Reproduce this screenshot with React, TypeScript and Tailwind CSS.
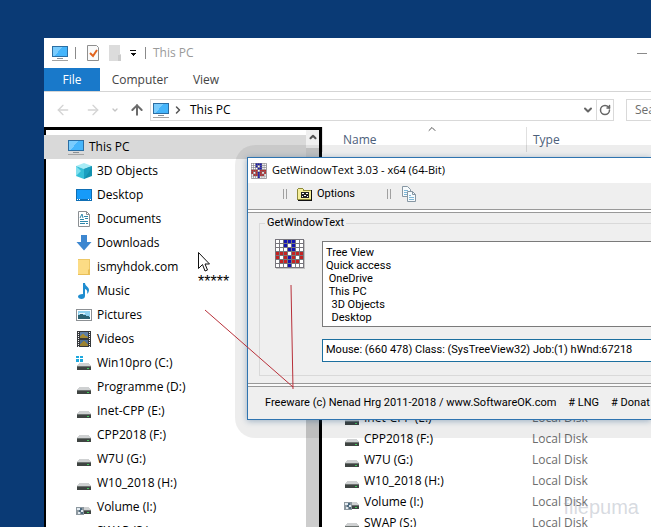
import React from 'react';
import { ArrowLeft, ArrowRight, ArrowUp, ChevronDown, ChevronRight, ChevronUp, RotateCw } from 'lucide-react';

type IconProps = { className?: string };

const PcIcon: React.FC<IconProps> = ({ className = '' }) => (
  <svg viewBox="0 0 16 16" className={`h-4 w-4 shrink-0 ${className}`} shapeRendering="crispEdges">
    <rect x="0" y="1" width="16" height="11" fill="#2b6ea3" />
    <rect x="1" y="2" width="14" height="9" fill="#45b5fb" />
    <path d="M1 2h9L3 11H1z" fill="#7accfd" />
    <rect x="5" y="13" width="6" height="1" fill="#8a8f94" />
    <rect x="0" y="15" width="16" height="1" fill="#a3a3a3" />
  </svg>
);

const CubeIcon = () => (
  <svg viewBox="0 0 16 16" className="h-4 w-4 shrink-0">
    <path d="M0 3 8 0l8 3-8 3z" fill="#a8ecf6" />
    <path d="M0 3l8 3v10l-8-3z" fill="#35bfd8" />
    <path d="M16 3L8 6v10l8-3z" fill="#1391ae" />
    <path d="M0 3l5 5-5 5z" fill="#7fdfee" />
    <path d="M8 6l8-3-3 6-5 7z" fill="#1a9fc0" />
  </svg>
);

const DesktopIcon = () => (
  <svg viewBox="0 0 16 16" className="h-4 w-4 shrink-0" shapeRendering="crispEdges">
    <rect x="0" y="2" width="16" height="12" fill="#0f6fb5" />
    <rect x="1" y="3" width="14" height="9" fill="#169bf9" />
    <path d="M1 12h1v1H1zM3 12h1v1H3zM12 12h1v1h-1zM14 12h1v1h-1z" fill="#fff" />
  </svg>
);

const DocumentIcon = () => (
  <svg viewBox="0 0 16 16" className="h-4 w-4 shrink-0">
    <path d="M2.5.5h8l3 3v12h-11z" fill="#fff" stroke="#8b8f93" />
    <path d="M10.5.5v3h3" fill="none" stroke="#8b8f93" />
    <path d="M4 7l2-4 1 4M8 5.500h4M4 8.500h4M9 7.500h3M4 10.500h8M4 12.500h5M10 12.500h2" fill="none" stroke="#2f87ab" />
  </svg>
);

const DownloadIcon = () => (
  <svg viewBox="0 0 16 16" className="h-4 w-4 shrink-0">
    <path d="M5 0h6v7h4.500L8 15.500.500 7H5z" fill="#3d87d0" />
  </svg>
);

const FolderIcon = () => (
  <svg viewBox="0 0 16 16" className="h-4 w-4 shrink-0">
    <path d="M2 0h11v11h1v5H2z" fill="#fcdc85" />
    <path d="M2 15h10v-4l2-2v7H2z" fill="#e9bf58" />
    <path d="M2 0h11v1H2zM13 0h1v10h-1z" fill="#edc867" />
  </svg>
);

const MusicIcon = () => (
  <svg viewBox="0 0 16 16" className="h-4 w-4 shrink-0">
    <path d="M7 0h2c0 3 4 4 4 7 0 2-1 3-2 4 1-3-.5-4.500-2-5v7c0 2-1.500 3-3.500 3S2 15 2 13.500 4 11 7 11z" fill="#1f8dd0" />
  </svg>
);

const PictureIcon = () => (
  <svg viewBox="0 0 16 16" className="h-4 w-4 shrink-0" shapeRendering="crispEdges">
    <rect x="0" y="2" width="16" height="12" fill="#8c9094" />
    <rect x="1" y="3" width="14" height="10" fill="#fff" />
    <rect x="2" y="4" width="12" height="8" fill="#8fd0ee" />
    <path d="M2 8l4-1 8 3v2H2z" fill="#2b6272" />
    <path d="M3 6h6v1H3z" fill="#e8f7fd" />
  </svg>
);

const VideoIcon = () => (
  <svg viewBox="0 0 16 16" className="h-4 w-4 shrink-0" shapeRendering="crispEdges">
    <rect x="1" y="0" width="14" height="16" fill="#35383b" />
    <path d="M2.500 1v15M13.500 1v15" stroke="#f5f5f5" strokeDasharray="1 1" />
    <rect x="4" y="1" width="8" height="6" fill="#5f7fa4" />
    <path d="M4 5l3-2 5 3v1H4z" fill="#a68c35" />
    <rect x="4" y="9" width="8" height="6" fill="#4e6f93" />
    <path d="M4 13l4-3 4 3v2H4z" fill="#9a8232" />
  </svg>
);

const DriveIcon: React.FC<{ badge?: 'windows' | 'volume' }> = ({ badge }) => (
  <svg viewBox="0 0 16 16" className="h-4 w-4 shrink-0" shapeRendering="crispEdges">
    <path d="M3 8h10l2 3H1z" fill="#cfd1d2" />
    <rect x="1" y="11" width="14" height="4" fill="#3f4442" />
    <rect x="1" y="11" width="14" height="1" fill="#6d7371" />
    <rect x="11" y="13" width="2" height="1" fill="#43c95c" />
    {badge === 'windows' && <path d="M0 1h3v2H0zM4 1h3v2H4zM0 4h3v3H0zM4 4h3v3H4z" fill="#1fa9de" />}
    {badge === 'volume' && (
      <>
        <rect x="0" y="8" width="8" height="8" fill="#8d989f" />
        <path d="M1 9h3v2H1zM5 11h2v2H5zM2 13h2v2H2z" fill="#e2eaf0" />
        <path d="M4 9h2v2H4zM3 11h2v2H3zM5 13h2v2H5z" fill="#4f6b80" />
      </>
    )}
  </svg>
);

// b = blue, r = red, w = white
const LOGO_ROWS = ['wwbbbww', 'wwbwbww', 'wwwbbww', 'rrrwrrr', 'rwrbrwr', 'wrrbrrw', 'wwwbwww'];
const LOGO_COLORS: Record<string, string> = { w: '#ffffff', b: '#1414b4', r: '#c42222' };

const LogoIcon: React.FC<IconProps> = ({ className = '' }) => (
  <svg viewBox="0 0 30 30" className={`shrink-0 ${className}`}>
    <rect x="1" y="1" width="29" height="29" fill="#c3c3c3" />
    <rect width="29" height="29" fill="#77757c" />
    {LOGO_ROWS.map((row, y) =>
      row.split('').map((cell, x) => (
        <rect key={`${x}-${y}`} x={x * 4 + 1} y={y * 4 + 1} width="3" height="3" fill={LOGO_COLORS[cell]} />
      ))
    )}
  </svg>
);

const treeItems = [
  { label: '3D Objects', icon: <CubeIcon /> },
  { label: 'Desktop', icon: <DesktopIcon /> },
  { label: 'Documents', icon: <DocumentIcon /> },
  { label: 'Downloads', icon: <DownloadIcon /> },
  { label: 'ismyhdok.com', icon: <FolderIcon /> },
  { label: 'Music', icon: <MusicIcon /> },
  { label: 'Pictures', icon: <PictureIcon /> },
  { label: 'Videos', icon: <VideoIcon /> },
  { label: 'Win10pro (C:)', icon: <DriveIcon badge="windows" /> },
  { label: 'Programme (D:)', icon: <DriveIcon /> },
  { label: 'Inet-CPP (E:)', icon: <DriveIcon /> },
  { label: 'CPP2018 (F:)', icon: <DriveIcon /> },
  { label: 'W7U (G:)', icon: <DriveIcon /> },
  { label: 'W10_2018 (H:)', icon: <DriveIcon /> },
  { label: 'Volume (I:)', icon: <DriveIcon badge="volume" /> },
  { label: 'SWAP (S:)', icon: <DriveIcon /> },
];

const drives = treeItems.slice(-6);

const windowText = ['Tree View', 'Quick access', ' OneDrive', ' This PC', '  3D Objects', '  Desktop'].join('\n');

const TitleBar = () => (
  <header className="flex h-[30px] shrink-0 items-center pl-2 text-[#9a9a9a]">
    <PcIcon />
    <span className="ml-[7px] h-3 w-px bg-[#8a8a8a]" />
    <button aria-label="Properties" className="ml-[9px]">
      <svg viewBox="0 0 16 16" className="h-4 w-4">
        <path d="M2.500.500h9l2 2v13h-11z" fill="#fafafa" stroke="#8f8f8f" />
        <path d="M5 8l3 3 4-6" fill="none" stroke="#e2631c" strokeWidth="2" />
      </svg>
    </button>
    <button aria-label="New folder" className="ml-1.5">
      <svg viewBox="0 0 16 16" className="h-4 w-4">
        <path d="M2 0h11v9h1v7H2z" fill="#dcdcdc" />
        <path d="M11 10h3v6h-3z" fill="#cbcbcb" />
      </svg>
    </button>
    <button aria-label="Customize toolbar" className="ml-1.5">
      <svg viewBox="0 0 8 8" className="h-2 w-2" shapeRendering="crispEdges">
        <path d="M1 1h6v1H1zM1 4h6L4 7z" fill="#111" />
      </svg>
    </button>
    <span className="ml-2 h-3 w-px bg-[#8a8a8a]" />
    <h1 className="ml-[7px]">This PC</h1>
    <button aria-label="Minimize" className="ml-auto h-4 pr-1">
      <span className="block h-px w-2.5 bg-[#8a8a8a]" />
    </button>
  </header>
);

const Ribbon = () => (
  <nav className="flex h-6 shrink-0 border-b border-[#d5d5d5] text-[#444]">
    <button className="w-14 bg-[#1979ca] text-white">File</button>
    <button className="w-20">Computer</button>
    <button className="w-[52px]">View</button>
  </nav>
);

const AddressBar = () => (
  <div className="flex h-[35px] shrink-0 items-center">
    <div className="flex w-[106px] shrink-0 items-center pl-[11px]">
      <button aria-label="Back"><ArrowLeft className="h-4 w-4 text-[#d4d4d4]" /></button>
      <button aria-label="Forward" className="ml-3.5"><ArrowRight className="h-4 w-4 text-[#d4d4d4]" /></button>
      <button aria-label="Recent locations" className="ml-2.5"><ChevronDown className="h-2 w-2 text-[#c4c4c4]" strokeWidth={4} /></button>
      <button aria-label="Up" className="ml-2.5"><ArrowUp className="h-4 w-4 text-[#6b6b6b]" strokeWidth={3} /></button>
    </div>
    <div className="flex h-[22px] flex-1 items-center border border-[#d9d9d9] pl-0.5">
      <PcIcon />
      <ChevronRight className="ml-[3px] h-3 w-3 text-[#555]" strokeWidth={3} />
      <button className="ml-1.5 text-black">This PC</button>
      <button aria-label="Address history" className="mr-0.5 ml-auto"><ChevronDown className="h-3 w-3 text-[#666]" strokeWidth={4} /></button>
      <button aria-label="Refresh" className="flex h-full w-[17px] items-center justify-center border-l border-[#d9d9d9]">
        <RotateCw className="h-3 w-3 text-[#666]" strokeWidth={3} />
      </button>
    </div>
    <input
      aria-label="Search"
      placeholder="Sea"
      className="ml-3 h-[22px] w-[25px] shrink-0 border border-r-0 border-[#d9d9d9] pl-2 outline-none placeholder:text-[#6d6d6d]"
    />
  </div>
);

const TreePane = () => (
  <aside className="flex w-[278px] shrink-0 border-t-3 border-r-3 border-black">
    <div className="min-w-0 flex-1 border-l-2 border-black pt-[5px]">
      <a href="#this-pc" className="-ml-0.5 flex h-6 items-center gap-[5px] bg-[#d9d9d9] pl-6">
        <PcIcon />
        This PC
      </a>
      <ul>
        {treeItems.map((item) => (
          <li key={item.label}>
            <a href="#folder" className="flex h-6 items-center gap-[5px] pl-[30px]">
              {item.icon}
              {item.label}
            </a>
          </li>
        ))}
      </ul>
    </div>
    <div className="flex w-[13px] shrink-0 flex-col bg-[#f0f0f0]">
      <ChevronUp className="mx-auto mt-0.5 mb-1.5 h-2.5 w-2.5 shrink-0 text-[#555]" strokeWidth={5} />
      <span className="flex-1 bg-[#cdcdcd]" />
    </div>
  </aside>
);

const FilePane = () => (
  <main className="min-w-0 flex-1">
    <div className="relative flex h-[25px] items-center border-l border-[#e5e5e5] text-[#4c607a]">
      <ChevronUp className="absolute -top-1 left-[103px] h-3 w-3 text-[#555]" />
      <span className="w-[203px] pl-5">Name</span>
      <span className="flex h-full items-center border-l border-[#e0e0e0] pl-1.5">Type</span>
    </div>
    <table className="mt-[255px] w-full table-fixed">
      <tbody>
        {drives.map((drive) => (
          <tr key={drive.label} className="h-[21px]">
            <td className="w-[210px] p-0 pl-[22px]">
              <span className="flex h-[21px] items-center gap-1">
                {drive.icon}
                {drive.label}
              </span>
            </td>
            <td className="p-0 text-[#6d6d6d]">Local Disk</td>
          </tr>
        ))}
      </tbody>
    </table>
  </main>
);

const GetWindowText = () => (
  <div className="absolute top-[145px] right-0 left-[235px] rounded-l-[20px] bg-black/7 pt-3 pb-[18px] pl-3">
    <section className="border border-r-0 border-[#2f74b0] bg-[#efefef] font-[Roboto,sans-serif] text-[11px] text-black shadow-[0_1px_6px_rgba(30,80,130,0.4)]">
      <header className="flex h-[25px] items-center gap-[5px] bg-white pl-[3px] font-['Open_Sans',sans-serif]">
        <LogoIcon className="h-4 w-4" />
        GetWindowText 3.03 - x64 (64-Bit)
      </header>
      <div className="flex h-[26px] items-center pb-1 pl-[35px]">
        <span className="h-2.5 w-1 border-x border-[#a0a0a0]" />
        <button className="ml-2.5 flex items-center gap-1">
          <svg viewBox="0 0 16 16" className="h-4 w-4" shapeRendering="crispEdges">
            <path d="M0 3h1V2h5v1h1v1h7v10H0z" fill="#8d8a3a" />
            <path d="M1 3h5v2h8v8H1z" fill="#f5ee9a" />
            <path d="M15 4v11H1v-1h13V4z" fill="#111" />
            <path d="M4 6h8v6H4z" fill="#222" />
            <path d="M5 7h2v1H5zM9 7h2v1H9zM7 9h2v1H7zM5 10h1v1H5zM10 10h1v1h-1z" fill="#fff" />
          </svg>
          Options
        </button>
        <span className="ml-8 h-2.5 w-1 border-x border-[#a0a0a0]" />
        <button aria-label="Copy" className="ml-2.5">
          <svg viewBox="0 0 16 16" className="h-4 w-4">
            <path d="M1.500.500h5l3 3v7h-8z" fill="#f7fbfd" stroke="#8797a3" />
            <path d="M3 4.500h4M3 6.500h5M3 8.500h5" stroke="#7fb8d8" />
            <path d="M6.500 5.500h5l3 3v7h-8z" fill="#f7fbfd" stroke="#8797a3" />
            <path d="M11.500 5.500v3h3" fill="none" stroke="#8797a3" />
            <path d="M8 9.500h2M8 11.500h5M8 13.500h5" stroke="#7fb8d8" />
          </svg>
        </button>
      </div>
      <div className="h-1 border-y border-[#999] bg-white" />
      <fieldset className="mt-1 ml-[11px] border border-r-0 border-[#d9d9d9] pb-[13px] pl-[15px]">
        <legend className="-ml-2.5 px-0.5 leading-3">GetWindowText</legend>
        <div className="flex items-start">
          <LogoIcon className="mt-2.5 h-[30px] w-[30px]" />
          <div className="ml-[17px] flex min-w-0 flex-1 flex-col gap-3 pt-3">
            <textarea
              aria-label="Window text"
              readOnly
              rows={6}
              defaultValue={windowText}
              className="block h-[86px] resize-none overflow-hidden border border-r-0 border-[#7a7a7a] bg-white px-[3px] py-1 leading-[13px] outline-none"
            />
            <input
              aria-label="Window details"
              readOnly
              defaultValue="Mouse: (660 478) Class: (SysTreeView32) Job:(1) hWnd:67218"
              className="h-[23px] border border-r-0 border-[#1c6f9f] bg-white px-[3px] pb-0.5 outline-none"
            />
          </div>
        </div>
      </fieldset>
      <div className="mt-[7px] h-1 border-y border-[#999] bg-[#fafafa]" />
      <footer className="flex h-8 items-center gap-3 overflow-hidden pl-[17px] whitespace-nowrap">
        <a href="#home">Freeware (c) Nenad Hrg 2011-2018 / www.SoftwareOK.com</a>
        <a href="#lng"># LNG</a>
        <a href="#donate"># Donat</a>
      </footer>
    </section>
  </div>
);

const App: React.FC = () => (
  <div className="relative flex h-screen overflow-hidden bg-[#0a3a75] pt-[38px] pl-11 font-['Open_Sans',sans-serif] text-xs text-black">
    <div className="flex min-w-0 flex-1 flex-col bg-white">
      <TitleBar />
      <Ribbon />
      <AddressBar />
      <div className="flex min-h-0 flex-1">
        <TreePane />
        <FilePane />
      </div>
    </div>

    <GetWindowText />

    {/* pointer with its masked label */}
    <svg viewBox="0 0 12 20" className="absolute top-[252px] left-[198px] h-5 w-3">
      <path d="M.500.500v16l4-4 2.500 6.500 2.500-1L7 12h4.500z" fill="#fff" stroke="#111" />
    </svg>
    <span className="absolute top-[274px] left-[198px] font-['Liberation_Sans',sans-serif] text-base leading-4">*****</span>

    {/* red callout lines */}
    <svg viewBox="0 0 96 108" className="pointer-events-none absolute top-[283px] left-[203px] h-[108px] w-24" fill="none" stroke="#b8303a">
      <path d="M2 27l88 77M88 2l2 104" />
    </svg>

    <span className="absolute right-3 bottom-2 font-['Liberation_Sans',sans-serif] text-xl leading-6 text-gray-400/40">filepuma</span>
  </div>
);

export default App;
